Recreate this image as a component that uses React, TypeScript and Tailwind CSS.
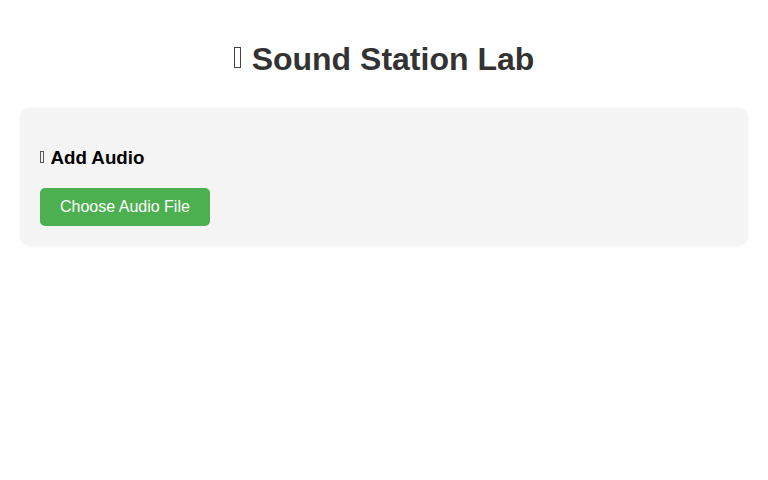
export default function App() {
  return (
    <div className="min-h-[480px] bg-white px-5 pt-5 [font-family:'Liberation_Sans',Arial,sans-serif]">
      {/* TITLE */}
      <h1 className="mt-[21px] mb-[30px] text-center text-[32px] font-bold leading-[37px] text-[#333]">
        <span className="mr-[2px] inline-block h-[21px] w-[7px] border border-[#444] align-[2px]" />
        {" "}Sound Station Lab
      </h1>

      {/* ADD AUDIO PANEL */}
      <div className="rounded-[10px] bg-[#f4f4f4] p-5 shadow-[0_0_4px_rgba(0,0,0,0.04)]">
        <h3 className="mt-[19px] mb-[20px] text-[18.72px] font-bold leading-[21px] text-black">
          <span className="mr-[2px] inline-block h-[12px] w-[4px] border border-[#555] align-[1px]" />
          {" "}Add Audio
        </h3>
        <button className="rounded-[5px] bg-[#4caf50] px-5 py-[10px] text-base leading-[18px] text-white">
          Choose Audio File
        </button>
      </div>
    </div>
  )
}
